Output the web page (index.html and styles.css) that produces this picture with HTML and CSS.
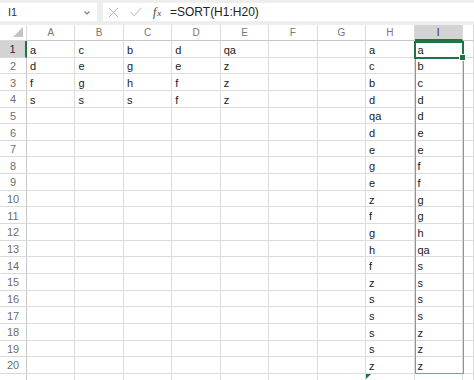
FILE: index.html
```html
<!DOCTYPE html>
<html>
<head>
<meta charset="utf-8">
<link rel="stylesheet" href="styles.css">
</head>
<body>
<div class="fbar">
  <div class="namebox"><span class="nm">I1</span><svg class="caret" width="6" height="4" viewBox="0 0 6 4"><path d="M0.5 0.5 L3 3 L5.5 0.5" fill="none" stroke="#7a7a7a" stroke-width="1.1"/></svg></div>
  <div class="fgap"></div>
  <div class="fbox">
    <svg class="ico" width="11" height="11" viewBox="0 0 11 11"><path d="M1 1 L10 10 M10 1 L1 10" stroke="#b4b4b4" stroke-width="1"/></svg>
    <svg class="ico chk" width="12" height="10" viewBox="0 0 12 10"><path d="M0.5 5 L4 8.8 L11.5 0.8" fill="none" stroke="#b4b4b4" stroke-width="1"/></svg>
    <span class="fx"><i>f</i><i class="fxx">x</i></span>
    <span class="formula">=SORT(H1:H20)</span>
  </div>
</div>
<div class="sheet">
  <div class="hrow"><div class="corner"><span class="tri"></span></div><div class="ch">A</div><div class="ch">B</div><div class="ch">C</div><div class="ch">D</div><div class="ch">E</div><div class="ch">F</div><div class="ch">G</div><div class="ch">H</div><div class="ch csel">I</div><div class="ch last"></div></div>
  <div class="row"><div class="rh rsel">1</div><div class="c">a</div><div class="c">c</div><div class="c">b</div><div class="c">d</div><div class="c">qa</div><div class="c"></div><div class="c"></div><div class="c">a</div><div class="c">a</div><div class="c last"></div></div>
  <div class="row"><div class="rh">2</div><div class="c">d</div><div class="c">e</div><div class="c">g</div><div class="c">e</div><div class="c">z</div><div class="c"></div><div class="c"></div><div class="c">c</div><div class="c">b</div><div class="c last"></div></div>
  <div class="row"><div class="rh">3</div><div class="c">f</div><div class="c">g</div><div class="c">h</div><div class="c">f</div><div class="c">z</div><div class="c"></div><div class="c"></div><div class="c">b</div><div class="c">c</div><div class="c last"></div></div>
  <div class="row"><div class="rh">4</div><div class="c">s</div><div class="c">s</div><div class="c">s</div><div class="c">f</div><div class="c">z</div><div class="c"></div><div class="c"></div><div class="c">d</div><div class="c">d</div><div class="c last"></div></div>
  <div class="row"><div class="rh">5</div><div class="c"></div><div class="c"></div><div class="c"></div><div class="c"></div><div class="c"></div><div class="c"></div><div class="c"></div><div class="c">qa</div><div class="c">d</div><div class="c last"></div></div>
  <div class="row"><div class="rh">6</div><div class="c"></div><div class="c"></div><div class="c"></div><div class="c"></div><div class="c"></div><div class="c"></div><div class="c"></div><div class="c">d</div><div class="c">e</div><div class="c last"></div></div>
  <div class="row"><div class="rh">7</div><div class="c"></div><div class="c"></div><div class="c"></div><div class="c"></div><div class="c"></div><div class="c"></div><div class="c"></div><div class="c">e</div><div class="c">e</div><div class="c last"></div></div>
  <div class="row"><div class="rh">8</div><div class="c"></div><div class="c"></div><div class="c"></div><div class="c"></div><div class="c"></div><div class="c"></div><div class="c"></div><div class="c">g</div><div class="c">f</div><div class="c last"></div></div>
  <div class="row"><div class="rh">9</div><div class="c"></div><div class="c"></div><div class="c"></div><div class="c"></div><div class="c"></div><div class="c"></div><div class="c"></div><div class="c">e</div><div class="c">f</div><div class="c last"></div></div>
  <div class="row"><div class="rh">10</div><div class="c"></div><div class="c"></div><div class="c"></div><div class="c"></div><div class="c"></div><div class="c"></div><div class="c"></div><div class="c">z</div><div class="c">g</div><div class="c last"></div></div>
  <div class="row"><div class="rh">11</div><div class="c"></div><div class="c"></div><div class="c"></div><div class="c"></div><div class="c"></div><div class="c"></div><div class="c"></div><div class="c">f</div><div class="c">g</div><div class="c last"></div></div>
  <div class="row"><div class="rh">12</div><div class="c"></div><div class="c"></div><div class="c"></div><div class="c"></div><div class="c"></div><div class="c"></div><div class="c"></div><div class="c">g</div><div class="c">h</div><div class="c last"></div></div>
  <div class="row"><div class="rh">13</div><div class="c"></div><div class="c"></div><div class="c"></div><div class="c"></div><div class="c"></div><div class="c"></div><div class="c"></div><div class="c">h</div><div class="c">qa</div><div class="c last"></div></div>
  <div class="row"><div class="rh">14</div><div class="c"></div><div class="c"></div><div class="c"></div><div class="c"></div><div class="c"></div><div class="c"></div><div class="c"></div><div class="c">f</div><div class="c">s</div><div class="c last"></div></div>
  <div class="row"><div class="rh">15</div><div class="c"></div><div class="c"></div><div class="c"></div><div class="c"></div><div class="c"></div><div class="c"></div><div class="c"></div><div class="c">z</div><div class="c">s</div><div class="c last"></div></div>
  <div class="row"><div class="rh">16</div><div class="c"></div><div class="c"></div><div class="c"></div><div class="c"></div><div class="c"></div><div class="c"></div><div class="c"></div><div class="c">s</div><div class="c">s</div><div class="c last"></div></div>
  <div class="row"><div class="rh">17</div><div class="c"></div><div class="c"></div><div class="c"></div><div class="c"></div><div class="c"></div><div class="c"></div><div class="c"></div><div class="c">s</div><div class="c">s</div><div class="c last"></div></div>
  <div class="row"><div class="rh">18</div><div class="c"></div><div class="c"></div><div class="c"></div><div class="c"></div><div class="c"></div><div class="c"></div><div class="c"></div><div class="c">s</div><div class="c">z</div><div class="c last"></div></div>
  <div class="row"><div class="rh">19</div><div class="c"></div><div class="c"></div><div class="c"></div><div class="c"></div><div class="c"></div><div class="c"></div><div class="c"></div><div class="c">s</div><div class="c">z</div><div class="c last"></div></div>
  <div class="row"><div class="rh">20</div><div class="c"></div><div class="c"></div><div class="c"></div><div class="c"></div><div class="c"></div><div class="c"></div><div class="c"></div><div class="c">z</div><div class="c">z</div><div class="c last"></div></div>
  <div class="row"><div class="rh"></div><div class="c"></div><div class="c"></div><div class="c"></div><div class="c"></div><div class="c"></div><div class="c"></div><div class="c"></div><div class="c"><span class="errtri"></span></div><div class="c"></div><div class="c last"></div></div>
  <div class="spill"></div>
  <div class="active"><span class="handle"></span></div>
</div>
</body>
</html>
```

FILE: styles.css
```css
html, body {
  margin: 0;
  padding: 0;
  background: #ffffff;
  width: 474px;
  height: 380px;
  overflow: hidden;
  font-family: "Liberation Sans", Arial, sans-serif;
  color: #1f1f1f;
}

.fbar {
  display: flex;
  height: 25px;
  box-sizing: border-box;
  padding: 3px 0 4px 0;
  background: #eeeeee;
}

.namebox {
  width: 97px;
  flex: none;
  background: #ffffff;
  display: flex;
  align-items: center;
  justify-content: space-between;
  padding: 0 7px 0 8px;
  box-sizing: border-box;
  font-size: 11px;
  color: #333;
}

.caret { display: block; margin-top: 1px; }

.fgap { width: 6px; flex: none; }

.fbox {
  flex: 1;
  background: #ffffff;
  display: flex;
  align-items: center;
  padding-left: 2px;
}

.ico { display: block; flex: none; margin-left: 3px; }
.chk { margin-left: 11px; }

.fx {
  margin-left: 11px;
  font-family: "Liberation Serif", "Times New Roman", serif;
  font-size: 12px;
  color: #444;
  width: 14px;
}
.fxx { font-size: 9px; margin-left: 1px; }

.formula {
  margin-left: 3px;
  font-size: 12px;
  color: #222;
}

.sheet {
  position: relative;
}

.hrow {
  display: flex;
  height: 16px;
}

.corner {
  width: 27px;
  flex: none;
  position: relative;
  box-sizing: border-box;
  border-right: 1px solid #dadada;
  border-bottom: 1px solid #dadada;
  background: #ffffff;
}

.tri {
  position: absolute;
  right: 3px;
  bottom: 3px;
  width: 0;
  height: 0;
  border-left: 10px solid transparent;
  border-bottom: 10px solid #c3c3c3;
}

.ch {
  width: 48.44px;
  flex: none;
  box-sizing: border-box;
  border-right: 1px solid #dadada;
  border-bottom: 1px solid #c8c8c8;
  background: #ffffff;
  font-size: 10px;
  color: #767676;
  display: flex;
  align-items: center;
  justify-content: center;
}

.ch.csel {
  background: #d3d3d3;
  color: #2a2a2a;
  border-bottom: 2px solid #217346;
}

.last { flex: 1; width: auto; }

.row {
  display: flex;
  height: 16.65px;
}

.rh {
  width: 27px;
  flex: none;
  box-sizing: border-box;
  border-right: 1px solid #c8c8c8;
  border-bottom: 1px solid #dadada;
  background: #ffffff;
  font-size: 11px;
  color: #6e6e6e;
  display: flex;
  align-items: center;
  justify-content: center;
  padding-top: 1px;
}

.rh.rsel {
  background: #d3d3d3;
  color: #2a2a2a;
  border-right: 2px solid #217346;
}

.c {
  width: 48.44px;
  flex: none;
  box-sizing: border-box;
  border-right: 1px solid #dcdcdc;
  border-bottom: 1px solid #dcdcdc;
  font-size: 11px;
  color: #1a1a1a;
  padding-left: 3px;
  display: flex;
  align-items: center;
  padding-top: 2px;
  position: relative;
}

.c.last { flex: 1; width: auto; }

.errtri {
  position: absolute;
  left: 0;
  top: 0;
  width: 0;
  height: 0;
  border-top: 5px solid #1e7145;
  border-right: 5px solid transparent;
}

.spill {
  position: absolute;
  left: 414.5px;
  top: 16px;
  width: 49px;
  height: 333px;
  box-sizing: border-box;
  border: 1px solid #7d95bd;
  pointer-events: none;
}

.active {
  position: absolute;
  left: 414px;
  top: 15.5px;
  width: 50px;
  height: 18px;
  box-sizing: border-box;
  border: 2px solid #217346;
}

.handle {
  position: absolute;
  right: -4px;
  bottom: -4px;
  width: 5px;
  height: 5px;
  background: #217346;
  border: 1px solid #ffffff;
}
```
